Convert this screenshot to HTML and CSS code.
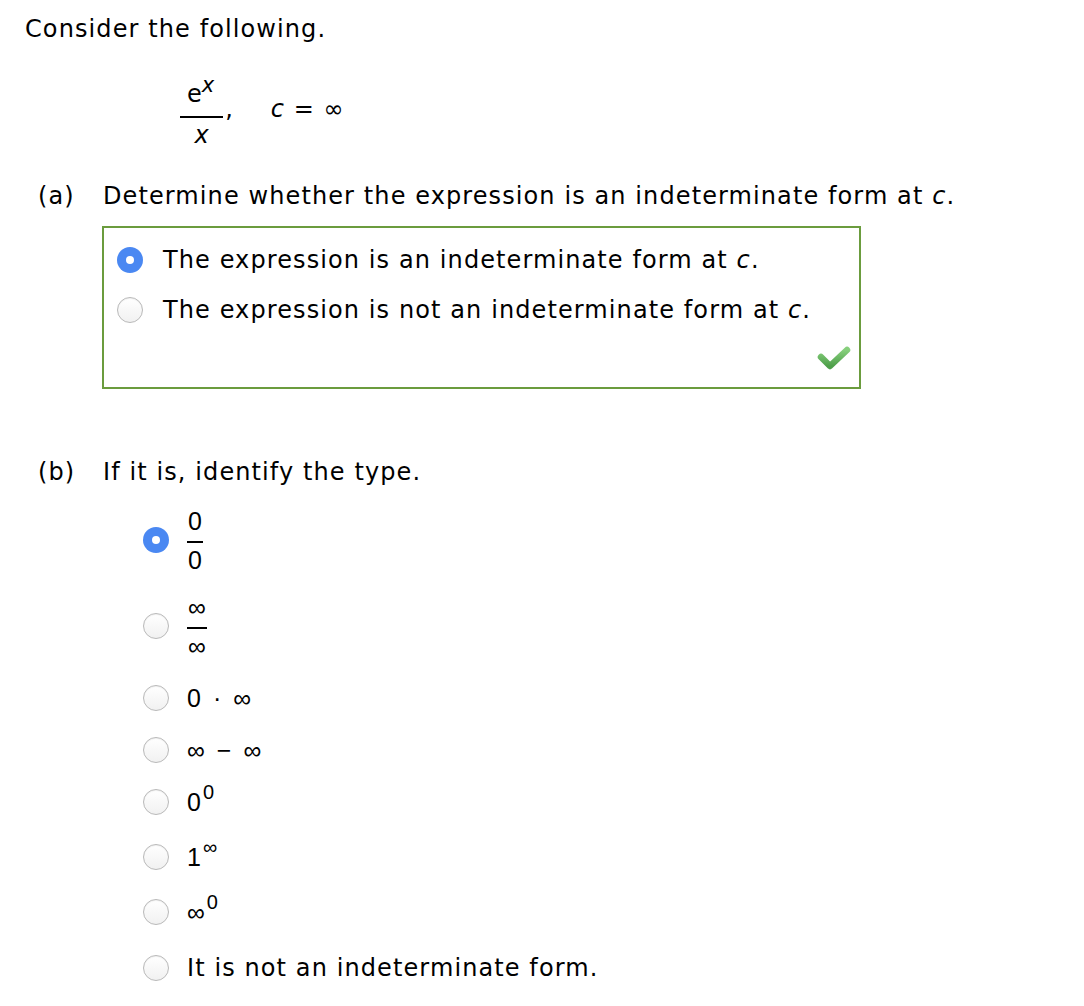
FILE: index.html
```html
<!DOCTYPE html>
<html lang="en">
<head>
    <meta charset="UTF-8">
    <title>Indeterminate forms</title>
    <link rel="stylesheet" href="styles.css">
</head>
<body>
    <div class="page">
        <p class="intro">Consider the following.</p>

        <div class="given">
            <span class="frac">
                <span class="num">e<sup><i>x</i></sup></span>
                <span class="den"><i>x</i></span>
            </span>
            <span class="comma">,</span>
            <span class="point"><i>c</i> = &infin;</span>
        </div>

        <div class="part">
            <span class="label">(a)</span>
            <span>Determine whether the expression is an indeterminate form at <i>c</i>.</span>
        </div>

        <div class="answer-box">
            <div class="option">
                <span class="radio checked"></span>
                <span>The expression is an indeterminate form at <i>c</i>.</span>
            </div>
            <div class="option">
                <span class="radio"></span>
                <span>The expression is not an indeterminate form at <i>c</i>.</span>
            </div>
            <div class="box-footer">
                <svg class="check" width="34" height="26" viewBox="0 0 34 26">
                    <defs>
                        <linearGradient id="g" x1="0" y1="0" x2="0" y2="1">
                            <stop offset="0" stop-color="#86cf7c"/>
                            <stop offset="1" stop-color="#4e9f4a"/>
                        </linearGradient>
                    </defs>
                    <polyline points="4,12 13,21 30,5" fill="none" stroke="url(#g)" stroke-width="6.5" stroke-linecap="round" stroke-linejoin="round"/>
                </svg>
            </div>
        </div>

        <div class="part part-b">
            <span class="label">(b)</span>
            <span>If it is, identify the type.</span>
        </div>

        <div class="choices">
            <div class="choice tall">
                <span class="radio checked"></span>
                <span class="math frac small-frac">
                    <span class="num">0</span>
                    <span class="den">0</span>
                </span>
            </div>
            <div class="choice tall">
                <span class="radio"></span>
                <span class="math frac small-frac">
                    <span class="num">&infin;</span>
                    <span class="den">&infin;</span>
                </span>
            </div>
            <div class="choice">
                <span class="radio"></span>
                <span class="math">0<span class="op">&middot;</span>&infin;</span>
            </div>
            <div class="choice">
                <span class="radio"></span>
                <span class="math">&infin;<span class="op">&minus;</span>&infin;</span>
            </div>
            <div class="choice raised">
                <span class="radio"></span>
                <span class="math">0<sup>0</sup></span>
            </div>
            <div class="choice raised">
                <span class="radio"></span>
                <span class="math">1<sup>&infin;</sup></span>
            </div>
            <div class="choice raised">
                <span class="radio"></span>
                <span class="math">&infin;<sup>0</sup></span>
            </div>
            <div class="choice">
                <span class="radio"></span>
                <span class="text">It is not an indeterminate form.</span>
            </div>
        </div>
    </div>
</body>
</html>
```

FILE: styles.css
```css
body {
    margin: 0;
    font-family: "DejaVu Sans", Verdana, sans-serif;
    font-size: 24px;
    letter-spacing: 1.1px;
    color: #000;
    background: #fff;
}
.page {
    padding: 14px 25px;
}
.intro {
    margin: 0;
    line-height: 30px;
}

/* given expression */
.given {
    display: flex;
    align-items: center;
    margin: 36px 0 0 155px;
    letter-spacing: 0;
}
.frac {
    display: inline-flex;
    flex-direction: column;
    align-items: stretch;
    text-align: center;
}
.given .num {
    line-height: 28px;
    padding: 0 9px 8px 7px;
    border-bottom: 2px solid #000;
}
.given .den {
    line-height: 28px;
    padding-top: 3px;
}
.given sup {
    font-size: 21px;
    line-height: 0;
    vertical-align: 10px;
}
.comma {
    margin: 0 0 12px 2px;
}
.point {
    margin: -11px 0 0 38px;
    font-size: 24px;
    letter-spacing: 1px;
}

/* parts */
.part {
    display: flex;
    line-height: 30px;
    margin-top: 32px;
}
.label {
    width: 78px;
    padding-left: 13px;
    box-sizing: border-box;
}
.part-b {
    margin-top: 68px;
}

/* answer box for (a) */
.answer-box {
    margin: 15px 0 0 77px;
    width: 742px;
    border: 2px solid #6b9c3e;
    padding: 7px 0 16px 13px;
}
.option {
    display: flex;
    align-items: center;
    height: 50px;
    gap: 20px;
}
.box-footer {
    display: flex;
    justify-content: flex-end;
    margin-top: 10px;
    padding-right: 8px;
}
.check {
    display: block;
}

/* radio buttons */
.radio {
    flex: none;
    width: 26px;
    height: 26px;
    border-radius: 50%;
    box-sizing: border-box;
    border: 1px solid #b9b9b9;
    background: linear-gradient(#ffffff, #f1f1f1);
    box-shadow: inset 0 1px 1px rgba(0, 0, 0, 0.06);
    position: relative;
}
.radio.checked {
    border: none;
    background: #4a88f2;
    box-shadow: none;
}
.radio.checked::after {
    content: "";
    position: absolute;
    left: 9px;
    top: 9px;
    width: 8px;
    height: 8px;
    border-radius: 50%;
    background: #fff;
}

/* choices for (b) */
.choices {
    display: flex;
    flex-direction: column;
    margin: 10px 0 0 118px;
}
.choice {
    display: flex;
    align-items: center;
    gap: 18px;
    height: 52px;
    line-height: 32px;
}
.choice.tall {
    height: 86px;
}
.choice.tall + .choice:not(.tall) {
    margin-top: 3px;
}
.choice.raised {
    height: 55px;
}
.choice:not(.raised) + .choice.raised {
    margin-top: -2px;
}
.choice.raised + .choice:not(.raised) {
    margin-top: 3px;
}
.math {
    font-family: "Liberation Sans", Arial, sans-serif;
    font-size: 25px;
    letter-spacing: 0;
}
.op {
    margin: 0 12px;
}
.math sup {
    font-size: 20px;
    line-height: 0;
    vertical-align: 12px;
    margin-left: 2px;
}
.small-frac .num {
    line-height: 28px;
    padding: 0 1px 6px;
    border-bottom: 2px solid #000;
}
.small-frac .den {
    line-height: 28px;
    padding-top: 3px;
}
```
